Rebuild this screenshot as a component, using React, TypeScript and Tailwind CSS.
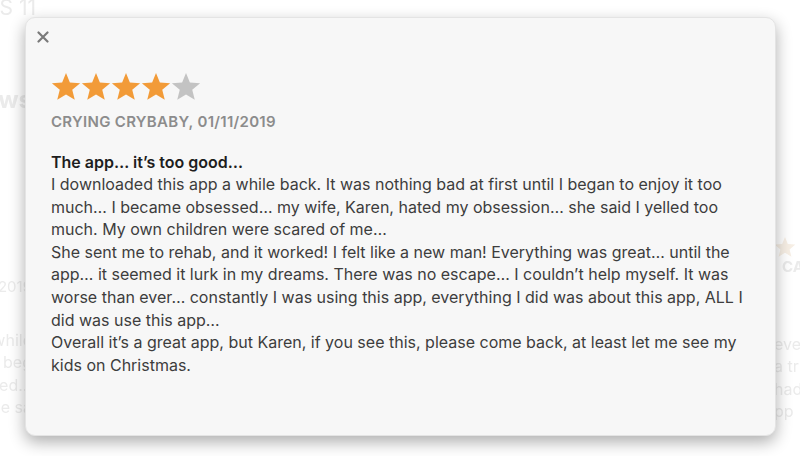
import React from 'react';

const font = { fontFamily: 'Inter, "Liberation Sans", Arial, sans-serif' };

const starPath = 'M12 0.6l3.1 7.6 8.2 0.6-6.3 5.3 2 8-7-4.3-7 4.3 2-8L0.7 8.8l8.2-0.6z';

const Star = ({ filled }: { filled: boolean }) => (
  <svg width="30" height="29" viewBox="0 0 24 23">
    <path d={starPath} fill={filled ? '#f29b38' : '#c3c3c3'} />
  </svg>
);

const paragraphs = [
  'I downloaded this app a while back. It was nothing bad at first until I began to enjoy it too much… I became obsessed… my wife, Karen, hated my obsession… she said I yelled too much. My own children were scared of me…',
  'She sent me to rehab, and it worked! I felt like a new man! Everything was great… until the app… it seemed it lurk in my dreams. There was no escape… I couldn’t help myself. It was worse than ever… constantly I was using this app, everything I did was about this app, ALL I did was use this app…',
  'Overall it’s a great app, but Karen, if you see this, please come back, at least let me see my kids on Christmas.',
];

export default function App() {
  return (
    <div className="relative w-[800px] h-[456px] overflow-hidden bg-white" style={font}>
      {/* faded page behind the sheet */}
      <div className="flex h-full text-[#ebebeb] blur-[0.6px]">
        <div className="w-[38px] flex flex-col items-end overflow-hidden whitespace-nowrap">
          <div className="text-[21px] leading-none -mt-[3px] pr-[2px]">iOS 11</div>
          <div className="mt-[67px] mr-[6px] text-[24px] font-bold leading-[30px]">Reviews</div>
          <div className="mt-[161px] mr-[6px] text-[15px]">1/2019</div>
          <div className="mt-[30px] mr-[6px] flex flex-col items-end text-[16px] leading-[22.5px]">
            <span>a while</span>
            <span>I beg</span>
            <span>ssed…</span>
            <span>she sa</span>
          </div>
        </div>
        <div className="flex-1" />
        <div className="w-[30px] flex flex-col overflow-hidden whitespace-nowrap pl-[4px]">
          <div className="mt-[236px]">
            <svg width="22" height="22" viewBox="0 0 24 23">
              <path d={starPath} fill="#f7efe5" />
            </svg>
          </div>
          <div className="-mt-[2px] text-[15px] font-bold pl-[8px]">CA</div>
          <div className="mt-[54px] flex flex-col text-[16px] leading-[22.5px]">
            <span>ever</span>
            <span>a tr</span>
            <span>had</span>
            <span>pp</span>
          </div>
        </div>
      </div>

      {/* review sheet */}
      <div className="absolute left-[25px] top-[17px] w-[751px] h-[419px] rounded-[10px] bg-[#f7f7f7] border border-[#e4e4e4] shadow-[0_6px_16px_rgba(0,0,0,0.32)] flex flex-col">
        <button className="ml-[10px] mt-[12px] w-[14px] h-[14px] flex items-center justify-center">
          <svg width="12" height="12" viewBox="0 0 12 12">
            <path d="M1.5 1.5l9 9M10.5 1.5l-9 9" stroke="#7a7a7a" strokeWidth="2.2" strokeLinecap="round" />
          </svg>
        </button>
        <div className="px-[25px] pt-[28px]">
          <div className="flex">
            {[0, 1, 2, 3, 4].map((i) => (
              <Star key={i} filled={i < 4} />
            ))}
          </div>
          <div className="mt-[10px] text-[15px] font-semibold tracking-[0.3px] text-[#8c8c8c]">
            CRYING CRYBABY, 01/11/2019
          </div>
          <div className="mt-[17px] text-[16px] leading-[22.6px] text-[#3d3d3d]">
            <div className="font-semibold text-[#1e1e1e]">The app… it’s too good…</div>
            {paragraphs.map((p, i) => (
              <p key={i}>{p}</p>
            ))}
          </div>
        </div>
      </div>
    </div>
  );
}
